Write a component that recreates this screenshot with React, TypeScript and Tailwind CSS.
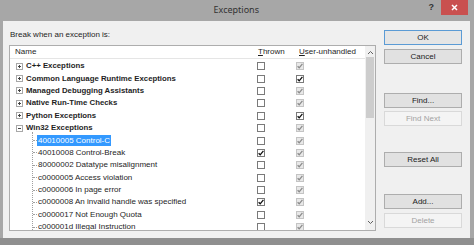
import React from 'react';

type Row = { name: string; child?: boolean; thrown?: boolean; user: 'gray' | 'on'; selected?: boolean; open?: boolean };

const rows: Row[] = [
  { name: 'C++ Exceptions', user: 'gray' },
  { name: 'Common Language Runtime Exceptions', user: 'on' },
  { name: 'Managed Debugging Assistants', user: 'gray' },
  { name: 'Native Run-Time Checks', user: 'gray' },
  { name: 'Python Exceptions', user: 'on' },
  { name: 'Win32 Exceptions', user: 'gray', open: true },
  { name: '40010005 Control-C', child: true, user: 'gray', selected: true },
  { name: '40010008 Control-Break', child: true, thrown: true, user: 'gray' },
  { name: '80000002 Datatype misalignment', child: true, user: 'gray' },
  { name: 'c0000005 Access violation', child: true, user: 'gray' },
  { name: 'c0000006 In page error', child: true, user: 'gray' },
  { name: 'c0000008 An invalid handle was specified', child: true, thrown: true, user: 'gray' },
  { name: 'c0000017 Not Enough Quota', child: true, user: 'gray' },
  { name: 'c000001d Illegal Instruction', child: true, user: 'gray' },
];

const Check = ({ kind }: { kind: 'off' | 'on' | 'gray' }) => {
  const gray = kind === 'gray';
  return (
    <div
      className={`w-[8px] h-[8px] border flex items-center justify-center ${
        gray ? 'border-[#c4c4c4] bg-[#e8e8e8]' : 'border-[#7a7a7a] bg-white'
      }`}
    >
      {kind !== 'off' && (
        <svg width="6" height="6" viewBox="0 0 6 6">
          <path d="M0.6 3.2 L2.2 4.8 L5.4 0.8" fill="none" stroke={gray ? '#8c8c8c' : '#111'} strokeWidth="1.3" />
        </svg>
      )}
    </div>
  );
};

const Expander = ({ open }: { open?: boolean }) => (
  <div className="w-[7px] h-[7px] border border-[#a8a8a8] bg-white flex items-center justify-center relative">
    <div className="absolute w-[3px] h-px bg-[#444]" />
    {!open && <div className="absolute w-px h-[3px] bg-[#444]" />}
  </div>
);

const Btn = ({ label, primary, disabled, className = '' }: { label: string; primary?: boolean; disabled?: boolean; className?: string }) => (
  <div
    className={`w-[78px] h-[15px] border flex items-center justify-center ${className} ${
      disabled
        ? 'border-[#d9d9d9] bg-[#f4f4f4] text-[#a3a3a3]'
        : primary
        ? 'border-[#5b9bd5] bg-[#e5e5e5] text-[#222]'
        : 'border-[#adadad] bg-[#e1e1e1] text-[#222]'
    }`}
  >
    {label}
  </div>
);

export default function App() {
  return (
    <div
      className="w-[474px] h-[245px] bg-[#8f8f8f] flex flex-col overflow-hidden text-[8px] leading-none"
      style={{ fontFamily: '"Liberation Sans", Arial, sans-serif' }}
    >
      {/* title bar */}
      <div className="h-[21px] bg-[#a7a7a7] flex items-start">
        <div className="flex-1 text-center text-[#333] text-[9px] pt-[5px] pl-[44px]" style={{ fontFamily: '"Noto Sans", sans-serif' }}>
          Exceptions
        </div>
        <div className="text-[#333] font-bold text-[9px] pt-[3px] mr-[7px]">?</div>
        <div className="w-[27px] h-[15px] bg-[#c9504f] mr-[6px] flex items-center justify-center">
          <svg width="7" height="7" viewBox="0 0 7 7">
            <path d="M1 1 L6 6 M6 1 L1 6" stroke="#fff" strokeWidth="1.5" />
          </svg>
        </div>
      </div>

      <div className="flex flex-1 mb-[7px]">
        <div className="w-[3px] bg-[#a7a7a7]" />
        <div className="flex-1 bg-[#f0f0f0] flex pt-[8px] pl-[6px]">
          {/* left side */}
          <div className="w-[367px] flex flex-col">
            <div className="h-[16px] text-[#1e1e1e] pl-[1px] pt-[2px]">Break when an exception is:</div>
            <div className="h-[186px] border border-[#adadad] bg-white flex overflow-hidden">
              <div className="flex-1 flex flex-col">
                <div className="h-[13px] shrink-0 flex items-center border-b border-[#e5e5e5] text-[#1e1e1e]">
                  <div className="w-[248px] pl-[5px]">Name</div>
                  <div className="w-[41px]"><span className="underline">T</span>hrown</div>
                  <div><span className="underline">U</span>ser-unhandled</div>
                </div>
                <div className="relative flex flex-col pt-[1px]">
                  <div className="absolute left-[22px] top-[73px] h-[110px] border-l border-dotted border-[#a0a0a0]" />
                  {rows.map((r) => (
                    <div key={r.name} className="h-[12.4px] shrink-0 flex items-center">
                      <div className="w-[247px] flex items-center">
                        {r.child ? (
                          <>
                            <div className="w-[27px] flex justify-end">
                              <div className="w-[4px] border-t border-dotted border-[#a0a0a0]" />
                            </div>
                            <div className={`px-[1px] h-[11px] flex items-center ${r.selected ? 'bg-[#3399ff] text-white' : 'text-[#1e1e1e]'}`}>
                              {r.name}
                            </div>
                          </>
                        ) : (
                          <>
                            <div className="w-[16px] flex justify-end pr-[3px]">
                              <Expander open={r.open} />
                            </div>
                            <div className="font-bold text-[7.8px] text-[#1e1e1e]">{r.name}</div>
                          </>
                        )}
                      </div>
                      <div className="w-[39px]">
                        <Check kind={r.thrown ? 'on' : 'off'} />
                      </div>
                      <Check kind={r.user} />
                    </div>
                  ))}
                </div>
              </div>
              {/* scrollbar */}
              <div className="w-[10px] bg-[#f0f0f0] flex flex-col items-center">
                <svg width="7" height="5" viewBox="0 0 7 5" className="mt-[4px]">
                  <path d="M1 4 L3.5 1.5 L6 4" fill="none" stroke="#606060" strokeWidth="1" />
                </svg>
                <div className="w-[8px] h-[61px] bg-[#cdcdcd] mt-[2px]" />
                <div className="flex-1" />
                <svg width="7" height="5" viewBox="0 0 7 5" className="mb-[5px]">
                  <path d="M1 1 L3.5 3.5 L6 1" fill="none" stroke="#606060" strokeWidth="1" />
                </svg>
              </div>
            </div>
          </div>

          {/* right buttons */}
          <div className="flex flex-col pl-[8px] pt-[1px]">
            <Btn label="OK" primary />
            <Btn label="Cancel" className="mt-[4px]" />
            <Btn label="Find..." className="mt-[29px]" />
            <Btn label="Find Next" disabled className="mt-[3px]" />
            <Btn label="Reset All" className="mt-[26px]" />
            <Btn label="Add..." className="mt-[27px]" />
            <Btn label="Delete" disabled className="mt-[4px]" />
          </div>
        </div>
        <div className="w-[4px] bg-[#a7a7a7]" />
      </div>
    </div>
  );
}
